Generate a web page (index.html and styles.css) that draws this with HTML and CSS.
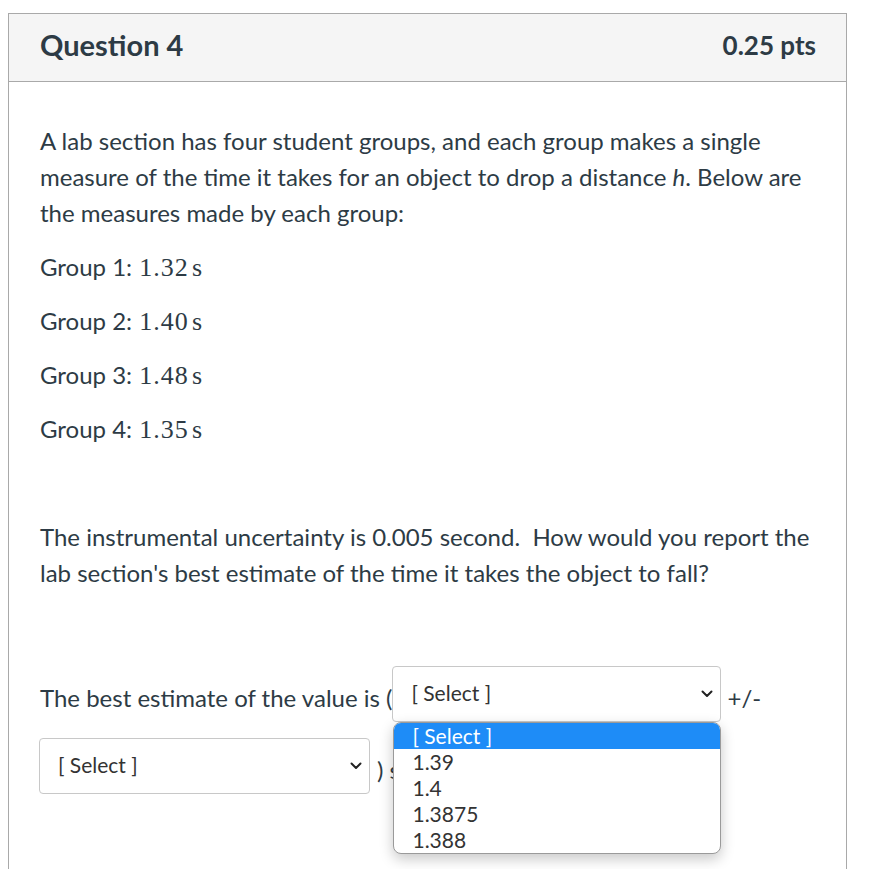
FILE: index.html
```html
<!DOCTYPE html>
<html lang="en">
<head>
<meta charset="utf-8">
<title>Question 4</title>
<link rel="stylesheet" href="styles.css">
</head>
<body>
<div class="question">
  <div class="q-header">
    <h2 class="q-title">Question 4</h2>
    <span class="q-pts">0.25 pts</span>
  </div>
  <div class="q-text">
    <p>A lab section has four student groups, and each group makes a single measure of the time it takes for an object to drop a distance <em>h</em>. Below are the measures made by each group:</p>
    <p>Group 1: <span class="math">1.32&#8202;s</span></p>
    <p>Group 2: <span class="math">1.40&#8202;s</span></p>
    <p>Group 3: <span class="math">1.48&#8202;s</span></p>
    <p>Group 4: <span class="math">1.35&#8202;s</span></p>
    <p>&nbsp;</p>
    <p>The instrumental uncertainty is 0.005 second.&nbsp; How would you report the lab section's best estimate of the time it takes the object to fall?</p>
    <p>&nbsp;</p>
    <div class="answer">
      <span class="ans-text">The best estimate of the value is (</span>
      <div class="select open">
        <span class="sel-label">[ Select ]</span>
        <svg class="chev" width="12" height="8" viewBox="0 0 12 8"><path d="M1.5 1.5 L6 6 L10.5 1.5" fill="none" stroke="#222" stroke-width="2" stroke-linecap="round" stroke-linejoin="round"/></svg>
        <ul class="dropdown">
          <li class="active">[ Select ]</li>
          <li>1.39</li>
          <li>1.4</li>
          <li>1.3875</li>
          <li>1.388</li>
        </ul>
      </div>
      <span class="ans-text pm">+/-</span>
      <div class="select second">
        <span class="sel-label">[ Select ]</span>
        <svg class="chev" width="12" height="8" viewBox="0 0 12 8"><path d="M1.5 1.5 L6 6 L10.5 1.5" fill="none" stroke="#222" stroke-width="2" stroke-linecap="round" stroke-linejoin="round"/></svg>
      </div>
      <span class="ans-text tail">) s</span>
    </div>
  </div>
</div>
</body>
</html>
```

FILE: styles.css
```css
html, body {
  margin: 0;
  padding: 0;
  background: #ffffff;
}

body {
  font-family: Lato, "Open Sans", "Liberation Sans", sans-serif;
  color: #2d3b45;
  overflow: hidden;
}

.question {
  margin: 13px 0 0 8px;
  width: 837px;
  border: 1px solid #a9a9a9;
  border-bottom: none;
  min-height: 900px;
  background: #fff;
}

.q-header {
  display: flex;
  justify-content: space-between;
  align-items: center;
  box-sizing: border-box;
  height: 68px;
  padding: 0 30px 6px 31px;
  background: #f5f5f5;
  border-bottom: 1px solid #a9a9a9;
}

.q-title {
  margin: 0;
  font-size: 29px;
  font-weight: 700;
  color: #2d3b45;
}

.q-pts {
  font-size: 26px;
  font-weight: 700;
  color: #2d3b45;
}

.q-text {
  padding: 23px 30px 0 31px;
  font-size: 24px;
  line-height: 36px;
}

.q-text p {
  margin: 18px 0;
}

.math {
  font-family: "Liberation Serif", "DejaVu Serif", serif;
  font-size: 26px;
  line-height: 1;
  letter-spacing: 1px;
  margin-left: 1px;
}

.answer {
  display: flex;
  flex-wrap: wrap;
  align-items: center;
  row-gap: 16px;
  padding-top: 3px;
}

.ans-text {
  padding-top: 8px;
  white-space: nowrap;
}

.pm {
  margin-left: 6px;
}

.tail {
  margin-left: 7px;
}

.select {
  position: relative;
  box-sizing: border-box;
  width: 329px;
  height: 56px;
  margin-left: 0;
  border: 1px solid #c8c8c8;
  border-radius: 4px;
  background: #fff;
  display: flex;
  align-items: center;
  justify-content: space-between;
  padding: 0 7px 3px 18px;
  font-size: 21px;
  color: #333;
}

.select.second {
  width: 331px;
  margin-left: -1px;
}

.sel-label {
  line-height: 36px;
}

.chev {
  margin-top: 2px;
}

.dropdown {
  position: absolute;
  top: 55px;
  left: 0;
  width: 328px;
  box-sizing: border-box;
  margin: 0;
  padding: 0;
  list-style: none;
  border: 1px solid #9a9a9a;
  border-radius: 8px;
  background: #fff;
  overflow: hidden;
  box-shadow: 0 5px 14px rgba(0, 0, 0, 0.22);
  z-index: 10;
}

.dropdown li {
  height: 26px;
  line-height: 26px;
  padding-left: 18px;
  font-size: 21px;
  color: #333;
}

.dropdown li.active {
  background: #1e8cf7;
  color: #fff;
}
```
